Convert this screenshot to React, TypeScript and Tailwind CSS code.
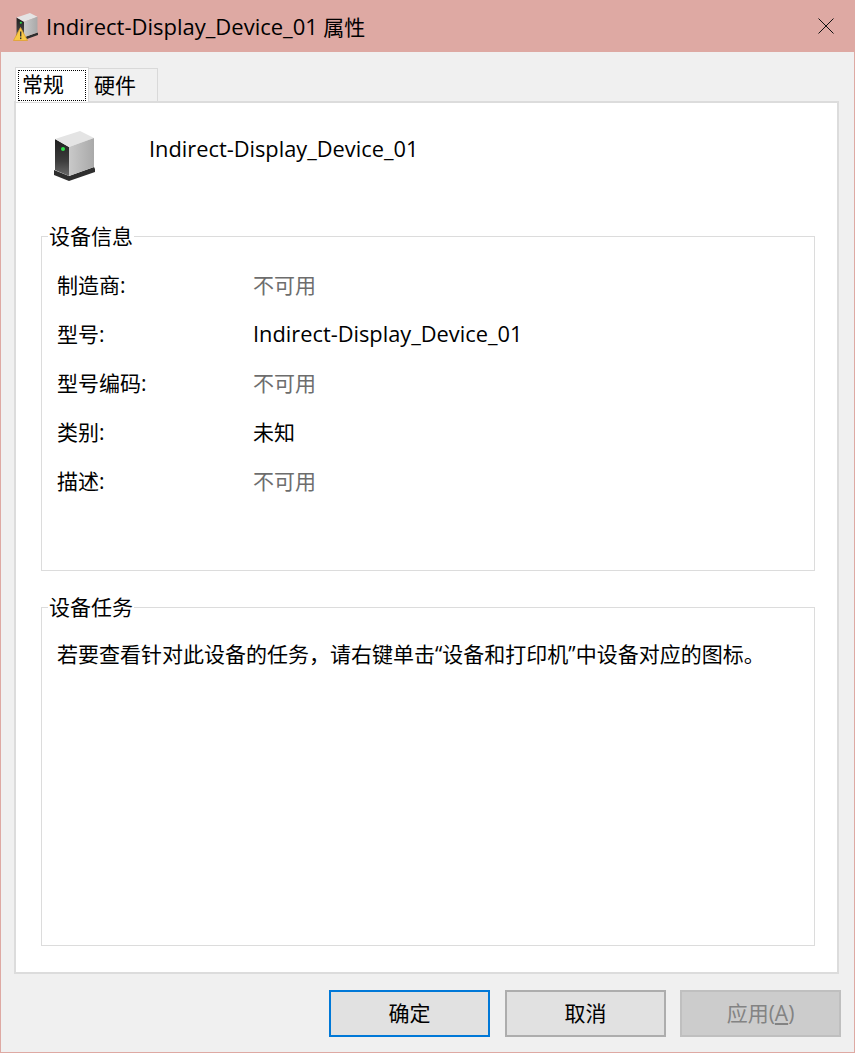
import React from "react";

const rows = [
  { label: "制造商:", value: "不可用", muted: true },
  { label: "型号:", value: "Indirect-Display_Device_01", muted: false, latin: true },
  { label: "型号编码:", value: "不可用", muted: true },
  { label: "类别:", value: "未知", muted: false },
  { label: "描述:", value: "不可用", muted: true },
];

function DeviceIcon({ w, h, id }: { w: number; h: number; id: string }) {
  return (
    <svg width={w} height={h} viewBox="0 0 41 50" className="block">
      <defs>
        <linearGradient id={id + "front"} x1="0" y1="0" x2="0" y2="1">
          <stop offset="0" stopColor="#1f1f1f" />
          <stop offset="0.6" stopColor="#3d3d3d" />
          <stop offset="1" stopColor="#6a6a6a" />
        </linearGradient>
        <linearGradient id={id + "side"} x1="0" y1="0" x2="1" y2="0">
          <stop offset="0" stopColor="#c9c9c9" />
          <stop offset="1" stopColor="#a9a9a9" />
        </linearGradient>
      </defs>
      <path d="M0 39 L15 45 L40 36 L41 38 L41 41 L15 50 L0 44 Z" fill="#2e2e2e" />
      <path d="M1 8 L15 16 L15 45 L1 39 Z" fill={`url(#${id}front)`} />
      <path d="M1 8 L26 0 L40 7 L15 16 Z" fill="#e4e4e4" />
      <path d="M15 16 L40 7 L40 36 L15 45 Z" fill={`url(#${id}side)`} />
      <circle cx="9" cy="18" r="2" fill="#2fe04a" />
    </svg>
  );
}

function Warning() {
  return (
    <svg width="15" height="14" viewBox="0 0 15 14" className="absolute left-[-3px] top-[14px]">
      <path d="M7.5 0.5 L14.5 13.5 L0.5 13.5 Z" fill="#f7c948" stroke="#e0a030" strokeWidth="0.8" />
      <rect x="7" y="4.5" width="1.4" height="5" fill="#333" />
      <rect x="7" y="10.5" width="1.4" height="1.6" fill="#333" />
    </svg>
  );
}

// latin text runs a little wider than the cjk size
function Latin({ children }: { children: React.ReactNode }) {
  return <span className="text-[21.8px]">{children}</span>;
}

export default function App() {
  return (
    <div
      className="w-[855px] h-[1053px] flex flex-col overflow-hidden border border-t-0 border-[#dea9a3] bg-[#f0f0f0] text-[21px] text-black"
      style={{ fontFamily: '"Open Sans", "Noto Sans CJK SC", sans-serif' }}
    >
      {/* title bar */}
      <div className="h-[52px] shrink-0 flex items-center bg-[#dea9a3] -mx-px">
        <div className="relative ml-[16px] w-[22px] h-[27px]">
          <DeviceIcon w={22} h={27} id="t" />
          <Warning />
        </div>
        <span className="ml-[8px] leading-none">
          <span className="text-[22px]">Indirect-Display_Device_01</span> 属性
        </span>
        <svg width="16" height="16" viewBox="0 0 16 16" className="ml-auto mr-[21px]">
          <path d="M0.5 0.5 L15.5 15.5 M15.5 0.5 L0.5 15.5" stroke="#111" strokeWidth="1" />
        </svg>
      </div>

      <div className="flex-1 flex flex-col pl-[13px] pr-[15px]">
        {/* tabs */}
        <div className="flex items-end h-[49px] pl-px relative z-10">
          <div className="w-[74px] h-[35px] -mb-px bg-white border border-b-0 border-[#d9d9d9] p-[2px]">
            <div className="h-[31px] border border-dotted border-black flex items-center pl-[3px] pb-[2px] leading-none">常规</div>
          </div>
          <div className="w-[69px] h-[33px] border border-l-0 border-b-0 border-[#d9d9d9] flex items-center pl-[5px] leading-none">
            硬件
          </div>
        </div>

        {/* panel */}
        <div className="h-[873px] w-[825px] bg-white border-2 border-[#dcdcdc] pt-[24px] pl-[25px] pr-[22px]">
          <div className="flex items-start h-[95px]">
            <div className="ml-[13px] mt-[4px]">
              <DeviceIcon w={41} h={50} id="m" />
            </div>
            <div className="ml-[54px] mt-[6px] leading-[32px]">
              <Latin>Indirect-Display_Device_01</Latin>
            </div>
          </div>

          <fieldset className="h-[350px] border border-[#dcdcdc] px-[15px] -mt-[1px]">
            <legend className="ml-[-9px] px-[1px] bg-white leading-[30px]">设备信息</legend>
            <div className="grid grid-cols-[196px_1fr] auto-rows-[49px] mt-[10px]">
              {rows.map((r) => (
                <React.Fragment key={r.label}>
                  <div className="flex items-center">{r.label}</div>
                  <div className={r.muted ? "flex items-center text-[#6d6d6d]" : "flex items-center"}>
                    {r.latin ? <Latin>{r.value}</Latin> : r.value}
                  </div>
                </React.Fragment>
              ))}
            </div>
          </fieldset>

          <fieldset className="h-[354px] mt-[21px] border border-[#dcdcdc] px-[15px]">
            <legend className="ml-[-9px] px-[1px] bg-white leading-[30px]">设备任务</legend>
            <p className="mt-[16px] leading-[32px] whitespace-nowrap">若要查看针对此设备的任务，请右键单击“设备和打印机”中设备对应的图标。</p>
          </fieldset>
        </div>

        {/* buttons */}
        <div className="flex justify-end mt-[16px] -mr-[2px]">
          <button className="w-[161px] h-[47px] bg-[#e1e1e1] border-2 border-[#0078d7]">确定</button>
          <button className="ml-[15px] w-[161px] h-[47px] bg-[#e1e1e1] border-2 border-[#adadad]">取消</button>
          <button className="ml-[14px] w-[161px] h-[47px] bg-[#cccccc] border-2 border-[#bfbfbf] text-[#838383]">
            应用(<span className="underline">A</span>)
          </button>
        </div>
      </div>
    </div>
  );
}
